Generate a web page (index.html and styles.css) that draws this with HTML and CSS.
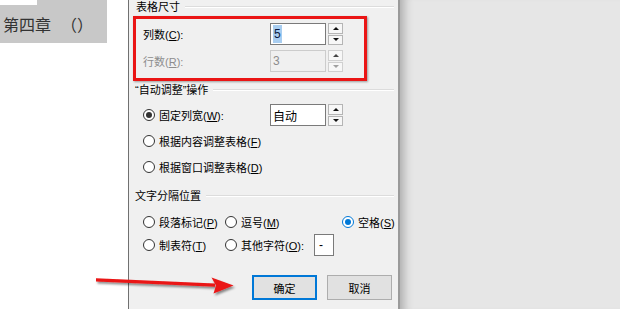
FILE: index.html
```html
<!DOCTYPE html>
<html lang="zh-CN">
<head>
<meta charset="utf-8">
<title>插入表格</title>
<link rel="stylesheet" href="styles.css">
</head>
<body>
<div class="page">
  <div class="doc">
    <div class="hl-top"></div>
    <div class="hl-line"><span class="chap">第四章</span><span class="paren">（）</span></div>
  </div>

  <div class="dialog">
    <div class="group-title"><span>表格尺寸</span></div>
    <div class="mark-box">
      <div class="field-row">
        <span class="flabel">列数(<u>C</u>):</span>
        <div class="input"><span class="sel">5</span></div>
        <div class="spin"><span class="sb"><i class="up"></i></span><span class="sb"><i class="down"></i></span></div>
      </div>
      <div class="field-row disabled">
        <span class="flabel">行数(<u>R</u>):</span>
        <div class="input"><span>3</span></div>
        <div class="spin"><span class="sb"><i class="up"></i></span><span class="sb"><i class="down"></i></span></div>
      </div>
    </div>

    <div class="group-title t2"><span>“自动调整”操作</span></div>
    <div class="radio-rows">
      <div class="rrow">
        <span class="radio checked"></span><span class="rtext fixed">固定列宽(<u>W</u>):</span>
        <div class="input"><span>自动</span></div>
        <div class="spin"><span class="sb"><i class="up"></i></span><span class="sb"><i class="down"></i></span></div>
      </div>
      <div class="rrow"><span class="radio"></span><span class="rtext">根据内容调整表格(<u>F</u>)</span></div>
      <div class="rrow"><span class="radio"></span><span class="rtext">根据窗口调整表格(<u>D</u>)</span></div>
    </div>

    <div class="group-title t3"><span>文字分隔位置</span></div>
    <div class="sep-grid">
      <div class="cell"><span class="radio"></span><span class="rtext">段落标记(<u>P</u>)</span></div>
      <div class="cell"><span class="radio"></span><span class="rtext">逗号(<u>M</u>)</span></div>
      <div class="cell"><span class="radio checked blue"></span><span class="rtext">空格(<u>S</u>)</span></div>
      <div class="cell"><span class="radio"></span><span class="rtext">制表符(<u>T</u>)</span></div>
      <div class="cell"><span class="radio"></span><span class="rtext">其他字符(<u>O</u>):</span><div class="input small"><span>-</span></div></div>
      <div class="cell"></div>
    </div>

    <div class="buttons">
      <button class="btn default">确定</button>
      <button class="btn">取消</button>
    </div>
  </div>

  <div class="backdrop"></div>

  <svg class="arrow" width="620" height="309" viewBox="0 0 620 309">
    <defs>
      <filter id="sh" x="-10%" y="-60%" width="120%" height="220%">
        <feDropShadow dx="1.5" dy="2" stdDeviation="1.2" flood-color="#000" flood-opacity="0.45"/>
      </filter>
    </defs>
    <g filter="url(#sh)" fill="#ea1515">
      <path d="M96 278.3 L215 283.6 L215 286.8 L96 281.6 Z"/>
      <path d="M233.5 285.6 L211.5 277.5 L216 285.4 L213.5 293.5 Z"/>
    </g>
  </svg>
</div>
</body>
</html>
```

FILE: styles.css
```css
html, body {
  margin: 0;
  padding: 0;
}
body {
  width: 620px;
  height: 309px;
  overflow: hidden;
  font-family: "Liberation Sans", "Noto Sans CJK SC", sans-serif;
}
.page {
  position: relative;
  display: flex;
  height: 309px;
}

/* document behind the dialog */
.doc {
  width: 128px;
  background: #ffffff;
}
.hl-top {
  margin-left: 37px;
  width: 70px;
  height: 5px;
  background: #c8c8c8;
}
.hl-line {
  width: 107px;
  height: 38px;
  box-sizing: border-box;
  padding-left: 3px;
  display: flex;
  align-items: center;
  background: #c8c8c8;
  font-family: "Noto Sans CJK SC", sans-serif;
  font-size: 16px;
  color: #333;
}
.paren {
  margin-left: 10px;
}

/* dialog */
.dialog {
  width: 272px;
  box-sizing: border-box;
  border-left: 1px solid #707070;
  border-right: 2px solid #9a9a9a;
  background: #f0f0f0;
  padding: 0 4px;
  font-size: 11px;
  color: #000;
}
.group-title {
  display: flex;
  align-items: center;
  height: 14px;
  line-height: 14px;
  padding-left: 3px;
  white-space: nowrap;
}
.group-title::after {
  content: "";
  flex: 1;
  height: 0;
  margin-left: 5px;
  border-top: 1px solid #dcdcdc;
  border-bottom: 1px solid #ffffff;
}
.group-title.t2 { margin-top: 2px; padding-left: 2px; }
.group-title.t3 { margin-top: 9px; padding-left: 2px; }

.mark-box {
  margin-top: 2px;
  width: 234px;
  box-sizing: border-box;
  border: 3px solid #ea1515;
  padding: 4px 0 6px 7px;
  box-shadow: 1px 1px 2px rgba(0,0,0,0.35);
}
.field-row {
  display: flex;
  align-items: center;
  height: 22px;
}
.field-row + .field-row { margin-top: 5px; }
.flabel {
  width: 127px;
}
.field-row.disabled .flabel { color: #8d8d8d; }

.input {
  width: 56px;
  height: 22px;
  box-sizing: border-box;
  border: 1px solid #7a7a7a;
  background: #ffffff;
  display: flex;
  align-items: center;
  padding-left: 2px;
  font-size: 12px;
}
.input .sel {
  background: #a8cdf0;
  color: #0a1a40;
  padding: 1px 1px;
  line-height: 16px;
}
.field-row.disabled .input {
  border-color: #cccccc;
  background: #f0f0f0;
  color: #8d8d8d;
}
.input.small {
  width: 20px;
  margin-left: 10px;
  padding-left: 4px;
}

.spin {
  margin-left: 2px;
  width: 15px;
  height: 22px;
  display: flex;
  flex-direction: column;
  gap: 1px;
}
.sb {
  flex: 1;
  box-sizing: border-box;
  border: 1px solid #b5b5b5;
  background: #f7f7f7;
  display: flex;
  align-items: center;
  justify-content: center;
}
.sb i {
  width: 0;
  height: 0;
  border-left: 3px solid transparent;
  border-right: 3px solid transparent;
}
.sb i.up { border-bottom: 3px solid #111; }
.sb i.down { border-top: 3px solid #111; }
.field-row.disabled .sb { border-color: #d0d0d0; }
.field-row.disabled .sb i.up { border-bottom-color: #444; }
.field-row.disabled .sb i.down { border-top-color: #a0a0a0; }

/* radios */
.radio-rows {
  margin-top: 5px;
  padding-left: 10px;
}
.rrow {
  display: flex;
  align-items: center;
  height: 26px;
}
.radio {
  width: 12px;
  height: 12px;
  box-sizing: border-box;
  border: 1px solid #333333;
  border-radius: 50%;
  background: #ffffff;
  margin-right: 4px;
  display: flex;
  align-items: center;
  justify-content: center;
  flex: none;
}
.radio.checked::after {
  content: "";
  width: 6px;
  height: 6px;
  border-radius: 50%;
  background: #333333;
}
.radio.blue { border-color: #0078d7; }
.radio.blue::after { background: #0078d7; }
.rtext.fixed { width: 111px; }

.sep-grid {
  margin-top: 7px;
  padding-left: 10px;
  display: grid;
  grid-template-columns: 82px 117px auto;
  grid-auto-rows: 23px;
}
.cell {
  display: flex;
  align-items: center;
  white-space: nowrap;
}

/* buttons */
.buttons {
  margin-top: 19px;
  display: flex;
  justify-content: flex-end;
  gap: 10px;
  padding-right: 2px;
}
.btn {
  width: 65px;
  height: 25px;
  box-sizing: border-box;
  border: 1px solid #adadad;
  background: #e1e1e1;
  font-family: "Liberation Sans", "Noto Sans CJK SC", sans-serif;
  font-size: 11px;
  color: #000;
  padding: 0;
  margin: 0;
}
.btn.default {
  border-color: #0078d7;
  box-shadow: inset 0 0 0 1px #0078d7;
}

.backdrop {
  flex: 1;
  background: #e6e6e6;
  box-shadow: inset 12px 0 10px -8px rgba(0,0,0,0.25);
}

.arrow {
  position: absolute;
  left: 0;
  top: 0;
  pointer-events: none;
}
```
